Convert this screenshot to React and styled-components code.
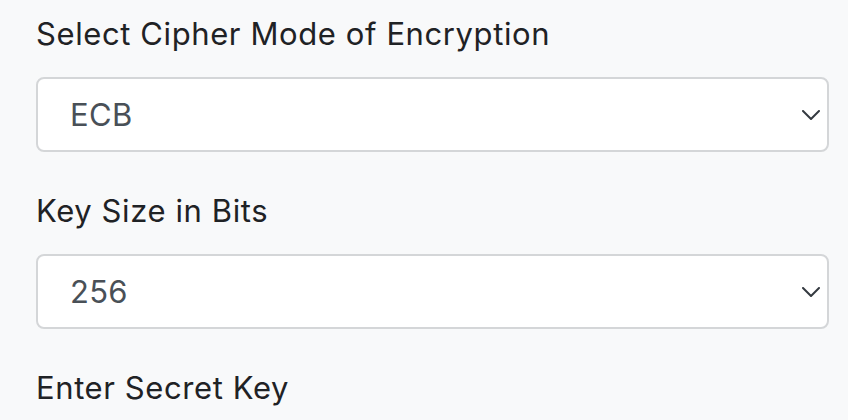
import React, { useState } from 'react';
import styled, { createGlobalStyle } from 'styled-components';

const GlobalStyle = createGlobalStyle`
  html, body {
    margin: 0;
    padding: 0;
    background: #f8f9fa;
  }
  body {
    font-family: 'Inter', 'Liberation Sans', sans-serif;
  }
`;

const App = () => {
  const [mode, setMode] = useState('ECB');
  const [keySize, setKeySize] = useState('256');

  return (
    <>
      <GlobalStyle />
      <FormContainer>
        <FormGroup>
          <Label htmlFor="mode">Select Cipher Mode of Encryption</Label>
          <SelectWrapper>
            <Select id="mode" value={mode} onChange={(e) => setMode(e.target.value)}>
              <option>ECB</option>
              <option>CBC</option>
            </Select>
            <Chevron />
          </SelectWrapper>
        </FormGroup>
        <FormGroup>
          <Label htmlFor="size">Key Size in Bits</Label>
          <SelectWrapper>
            <Select id="size" value={keySize} onChange={(e) => setKeySize(e.target.value)}>
              <option>128</option>
              <option>192</option>
              <option>256</option>
            </Select>
            <Chevron />
          </SelectWrapper>
        </FormGroup>
        <FormGroup>
          <Label htmlFor="key">Enter Secret Key</Label>
        </FormGroup>
      </FormContainer>
    </>
  );
};

const Chevron = () => (
  <ChevronIcon width="18" height="10" viewBox="0 0 18 10" fill="none">
    <path d="M1 1l8 8 8-8" stroke="#343a40" strokeWidth="2" strokeLinecap="round" strokeLinejoin="round" />
  </ChevronIcon>
);

const FormContainer = styled.div`
  padding: 14px 19px 0 36px;
  display: flex;
  flex-direction: column;
  gap: 39px;
`;

const FormGroup = styled.div`
  display: flex;
  flex-direction: column;
  gap: 23px;
`;

const Label = styled.label`
  font-size: 31px;
  line-height: 40px;
  letter-spacing: 0.6px;
  color: #1f2225;
  font-weight: 400;
`;

const SelectWrapper = styled.div`
  position: relative;
`;

const Select = styled.select`
  appearance: none;
  width: 100%;
  height: 75px;
  box-sizing: border-box;
  padding: 0 60px 0 32px;
  font-family: inherit;
  font-size: 31px;
  letter-spacing: 0.3px;
  color: #495057;
  background: #ffffff;
  border: 2px solid #d4d6d8;
  border-radius: 8px;
  outline: none;
`;

const ChevronIcon = styled.svg`
  position: absolute;
  right: 9px;
  top: 50%;
  transform: translateY(-50%);
  pointer-events: none;
`;

export default App;
